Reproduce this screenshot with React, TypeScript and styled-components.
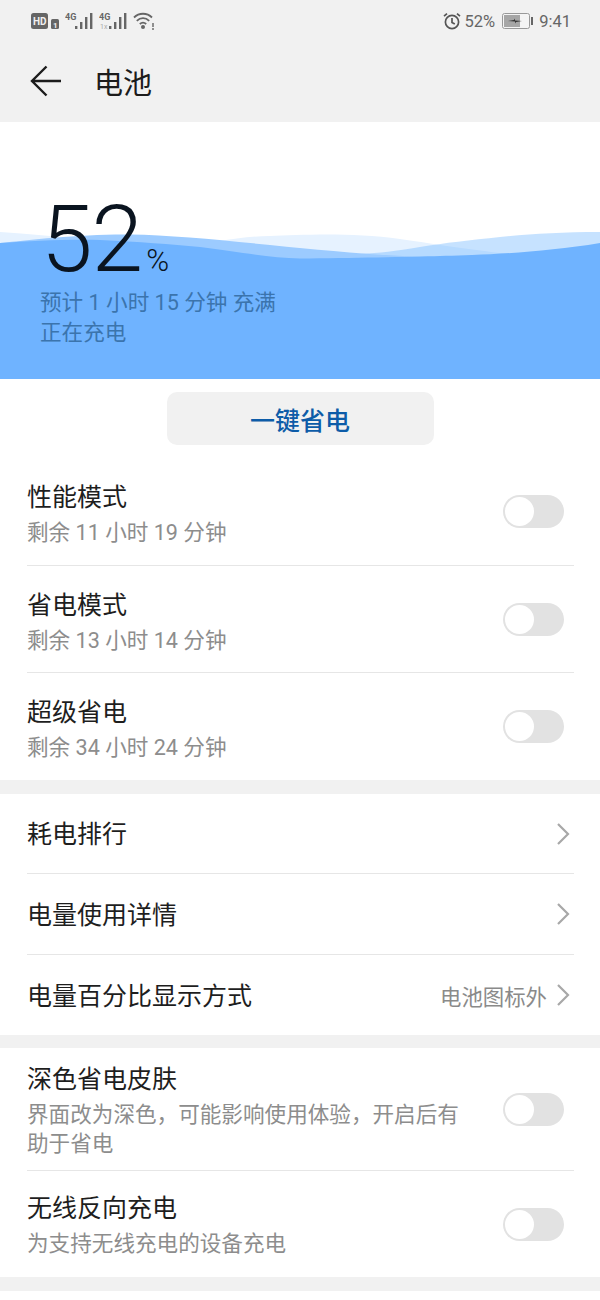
import React from "react";
import styled, { createGlobalStyle } from "styled-components";

const Global = createGlobalStyle`
  html, body { margin: 0; padding: 0; background: #fff; }
  body { font-family: "Roboto", "Noto Sans CJK SC", sans-serif; }
`;
const Page = styled.div`width: 600px; height: 1300px; overflow: hidden; background: #fff; display: flex; flex-direction: column;`;
const Top = styled.header`height: 122px; background: #f1f1f1; display: flex; flex-direction: column;`;
const StatusBar = styled.div`height: 42px; padding: 0 29px 0 31px; display: flex; align-items: center; justify-content: space-between; color: #666; font-size: 16.5px;`;
const StatusLeft = styled.div`display: flex; align-items: center; gap: 6px;`;
const StatusRight = styled.div`display: flex; align-items: center; gap: 4px;`;
const TitleBar = styled.div`flex: 1; display: flex; align-items: center; padding: 0 0 2px 30px; gap: 33px;`;
const Title = styled.h1`margin: 6px 0 0 -1px; font-size: 29px; font-weight: 400; color: #1c1c1c; line-height: 36px;`;
const Hero = styled.section`position: relative; height: 257px; background: #fff; overflow: hidden;`;
const Waves = styled.svg`position: absolute; left: 0; bottom: 0; display: block;`;
const HeroText = styled.div`position: absolute; left: 41px; top: 66px; display: flex; flex-direction: column;`;
const Level = styled.div`display: flex; align-items: baseline; color: #0a1420; margin: 2px 0 -2px 0; font-family: "Roboto", sans-serif; font-weight: 300;`;
const Big = styled.span`font-size: 93px; line-height: 100px; letter-spacing: -1px;`;
const Pct = styled.span`font-size: 31px; margin-left: 4px;`;
const HeroLine = styled.div`font-size: 21.6px; line-height: 30px; color: #3b74ad; margin-left: -1px;`;
const SaveWrap = styled.div`height: 79px; display: flex; justify-content: center; align-items: flex-start; padding-top: 13px; box-sizing: border-box;`;
const SaveBtn = styled.button`width: 267px; height: 53px; border: 0; border-radius: 10px; background: #f1f1f1; color: #0d5ca8; font: 500 25px "Noto Sans CJK SC", sans-serif; padding: 0;`;
const Gap = styled.div<{ $h: number }>`height: ${(p) => p.$h}px; background: #f1f1f1; flex: none;`;
const Row = styled.div<{ $h: number; $line?: boolean }>`
  height: ${(p) => p.$h}px; box-sizing: border-box; margin: 0 26px 0 27px; display: flex; align-items: center; justify-content: space-between; gap: 20px;
  border-bottom: ${(p) => (p.$line ? "1px solid #e6e6e6" : "0")};
`;
const RowText = styled.div<{ $shift: number }>`display: flex; flex-direction: column; min-width: 0; max-width: 440px; padding-top: ${(p) => p.$shift}px;`;
const RowTitle = styled.div`font-size: 25px; line-height: 34px; color: #1e1e1e;`;
const RowSub = styled.div`font-size: 21.6px; line-height: 29px; color: #8d8d8d; margin-top: 3px;`;
const Switch = styled.div`width: 61px; height: 33px; margin-right: 10px; border-radius: 17px; background: #e2e2e2; flex: none; display: flex; align-items: center; padding: 2px; box-sizing: border-box;`;
const Knob = styled.div`width: 29px; height: 29px; border-radius: 50%; background: #fff;`;
const Right = styled.div`display: flex; align-items: center; gap: 9px; color: #8a8a8a; font-size: 21.4px; flex: none;`;

const Arrow = () => (
  <svg width="32" height="32" viewBox="0 0 32 32" fill="none" stroke="#1c1c1c" strokeWidth="2.4">
    <path d="M31 16H3M16.5 1.5 2 16l14.5 14.5" />
  </svg>
);
const Chevron = () => (
  <svg width="14" height="22" viewBox="0 0 14 22" fill="none" stroke="#a8a8a8" strokeWidth="2.2" style={{ marginRight: 4 }}>
    <path d="M2 1l10 10L2 21" />
  </svg>
);
const Signal = ({ sim2 }: { sim2?: boolean }) => (
  <svg width="28" height="20" viewBox="0 0 28 20">
    <text x="0" y="8.5" fontSize="9" fontWeight="700" fill="#666" fontFamily="Roboto">4G</text>
    {sim2 && <text x="1" y="18" fontSize="7" fill="#aaa" fontFamily="Roboto">1x</text>}
    <rect x="10" y="15" width="2.4" height="3" fill="#666" />
    <rect x="15" y="11" width="2.4" height="7" fill="#666" />
    <rect x="20" y="6" width="2.4" height="12" fill="#666" />
    <rect x="25" y="2" width="2.4" height="16" fill="#666" />
  </svg>
);
const Wifi = () => (
  <svg width="21" height="20" viewBox="0 0 21 20" fill="none" stroke="#666" strokeWidth="1.8">
    <path d="M1 6.5C6 1.5 14 1.5 19 6.5M3.8 9.8C7.5 6.2 12.5 6.2 16.2 9.8M6.8 13C9 11.1 11 11.1 13.2 13" />
    <circle cx="10" cy="16" r="2" fill="#666" stroke="none" />
    <path d="M20 12v4M20 17v2" strokeWidth="1.4" />
  </svg>
);
const HdIcon = () => (
  <svg width="28" height="18" viewBox="0 0 28 18">
    <rect x="0" y="1" width="17" height="16" rx="2.5" fill="#666" />
    <text x="2" y="13" fontSize="10" fontWeight="700" fill="#f1f1f1" fontFamily="Roboto">HD</text>
    <rect x="20" y="7" width="8" height="10" rx="1.5" fill="#666" />
    <text x="22" y="15.5" fontSize="8" fontWeight="700" fill="#f1f1f1" fontFamily="Roboto">1</text>
  </svg>
);
const Alarm = () => (
  <svg width="18" height="18" viewBox="0 0 18 18" fill="none" stroke="#555" strokeWidth="1.7">
    <circle cx="9" cy="10" r="6.6" />
    <path d="M9 6v4.4l2.8 1.6M1 4.2 4 1.6M17 4.2 14 1.6" />
  </svg>
);
const BatteryBox = styled.svg`margin: 0 2px 0 3px; flex: none;`;
const Battery = () => (
  <BatteryBox width="31" height="16" viewBox="0 0 31 16">
    <rect x="0.5" y="0.5" width="27" height="15" rx="2" fill="#f4f4f4" stroke="#999" />
    <rect x="2" y="2" width="16" height="12" fill="#a6a6a6" />
    <path d="M6 8l6-1 1-1.5v2l7 .5-6 1-1 1.5v-2z" fill="#333" />
    <rect x="29" y="4" width="2" height="8" fill="#666" />
  </BatteryBox>
);

const W = 600, H = 257;
const HeroWaves = () => (
  <Waves width={W} height={H} viewBox={`0 0 ${W} ${H}`}>
    <path d="M0 110C20 111 35 113 50 114C100 122 130 124 180 124C210 122 240 114 270 114C300 113 350 110 400 117C430 121 480 130 540 135V257H0Z" fill="#e6f2ff" />
    <path d="M600 110C560 110 530 112 500 115C470 118 445 121 420 125C395 129 380 131 360 132C340 134 320 135 300 136V257H600Z" fill="rgba(100,175,255,0.37)" />
    <path d="M0 121C30 118 80 112 130 112.500C170 113 220 118 270 123C320 128 360 132 420 135V257H0Z" fill="#9ccbff" />
    <path d="M0 121C30 119 70 117 100 118C140 120 170 122 200 125C240 130 270 136 300 136.500C350 136 410 135 440 134C480 133 540 131 600 121V257H0Z" fill="#6fb3ff" />
  </Waves>
);

const Toggle = () => <Switch><Knob /></Switch>;

export default function App() {
  return (
    <Page>
      <Global />
      <Top>
        <StatusBar>
          <StatusLeft>
            <HdIcon /><Signal /><Signal sim2 /><Wifi />
          </StatusLeft>
          <StatusRight>
            <Alarm /><span>52%</span><Battery /><span>9:41</span>
          </StatusRight>
        </StatusBar>
        <TitleBar>
          <Arrow />
          <Title>电池</Title>
        </TitleBar>
      </Top>
      <Hero>
        <HeroWaves />
        <HeroText>
          <Level><Big>52</Big><Pct>%</Pct></Level>
          <HeroLine>预计 1 小时 15 分钟 充满</HeroLine>
          <HeroLine>正在充电</HeroLine>
        </HeroText>
      </Hero>
      <SaveWrap><SaveBtn>一键省电</SaveBtn></SaveWrap>
      <Row $h={108} $line><RowText $shift={5}><RowTitle>性能模式</RowTitle><RowSub>剩余 11 小时 19 分钟</RowSub></RowText><Toggle /></Row>
      <Row $h={107} $line><RowText $shift={5}><RowTitle>省电模式</RowTitle><RowSub>剩余 13 小时 14 分钟</RowSub></RowText><Toggle /></Row>
      <Row $h={107}><RowText $shift={5}><RowTitle>超级省电</RowTitle><RowSub>剩余 34 小时 24 分钟</RowSub></RowText><Toggle /></Row>
      <Gap $h={14} />
      <Row $h={80} $line><RowText $shift={2}><RowTitle>耗电排行</RowTitle></RowText><Right><Chevron /></Right></Row>
      <Row $h={81} $line><RowText $shift={3}><RowTitle>电量使用详情</RowTitle></RowText><Right><Chevron /></Right></Row>
      <Row $h={80}><RowText $shift={3}><RowTitle>电量百分比显示方式</RowTitle></RowText><Right>电池图标外<Chevron /></Right></Row>
      <Gap $h={13} />
      <Row $h={123} $line><RowText $shift={3}><RowTitle>深色省电皮肤</RowTitle><RowSub>界面改为深色，可能影响使用体验，开启后有助于省电</RowSub></RowText><Toggle /></Row>
      <Row $h={106}><RowText $shift={2}><RowTitle>无线反向充电</RowTitle><RowSub>为支持无线充电的设备充电</RowSub></RowText><Toggle /></Row>
      <Gap $h={14} />
    </Page>
  );
}
